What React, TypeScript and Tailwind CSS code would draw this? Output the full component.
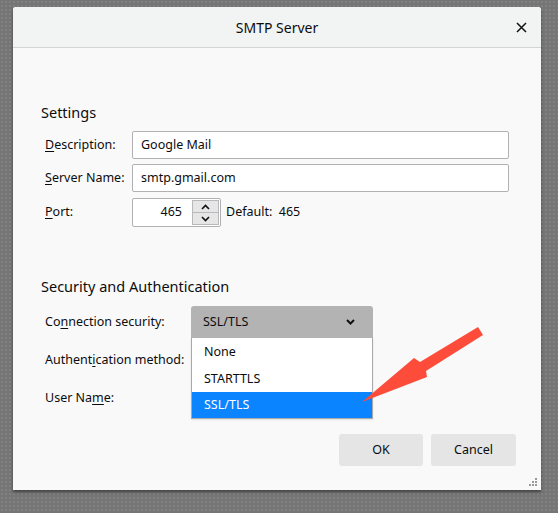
import React from "react";

const font = { fontFamily: '"Noto Sans", "Open Sans", sans-serif' };

function Key({ text, at }: { text: string; at: number }) {
  return (
    <>
      {text.slice(0, at)}
      <span className="underline underline-offset-2">{text[at]}</span>
      {text.slice(at + 1)}
    </>
  );
}

function Field({ value }: { value: string }) {
  return (
    <div className="flex h-[28px] w-[377px] items-center rounded-[2px] border border-[#b1b1b3] bg-white px-[8px] text-[12.5px]">
      {value}
    </div>
  );
}

function Spinner() {
  return (
    <div className="flex h-[29px] w-[89px] items-stretch rounded-[2px] border border-[#b1b1b3] bg-white">
      <div className="flex flex-1 items-center justify-end pr-[10px]">465</div>
      <div className="my-[1px] mr-[1px] flex w-[27px] flex-col border border-[#b9b9bb] bg-[#e6e6e6]">
        <div className="flex flex-1 items-center justify-center border-b border-[#b9b9bb]">
          <svg width="9" height="6" viewBox="0 0 9 6">
            <path d="M1 5 L4.5 1.5 L8 5" fill="none" stroke="#111" strokeWidth="1.6" />
          </svg>
        </div>
        <div className="flex flex-1 items-center justify-center">
          <svg width="9" height="6" viewBox="0 0 9 6">
            <path d="M1 1 L4.5 4.5 L8 1" fill="none" stroke="#111" strokeWidth="1.6" />
          </svg>
        </div>
      </div>
    </div>
  );
}

export default function App() {
  return (
    <div
      className="relative h-[513px] w-[558px] overflow-hidden bg-[#757575] bg-[radial-gradient(#828282_0.8px,transparent_0.8px)] bg-[size:4px_4px] pl-[13px] pt-[7px] text-[#0c0c0d]"
      style={font}
    >
      <div className="relative flex h-[483px] w-[528px] flex-col rounded-t-[3px] bg-[#f9f9fa] shadow-[0_2px_3px_rgba(0,0,0,0.45)]">
        {/* title bar */}
        <div className="relative flex h-[41px] shrink-0 items-center justify-center rounded-t-[3px] border-b border-[#d2d3d5] bg-[#f2f4f4] text-[14px]">
          SMTP Server
          <svg className="absolute right-[14px] top-[15px]" width="11" height="11" viewBox="0 0 11 11">
            <path d="M1 1 L10 10 M10 1 L1 10" stroke="#111" strokeWidth="1.5" />
          </svg>
        </div>

        <div className="flex flex-1 flex-col pl-[28px] text-[12.5px]">
          <div className="mt-[54px] text-[14.5px] leading-[20px]">Settings</div>

          <div className="mt-[9px] flex flex-col gap-[5px]">
            <div className="flex items-center">
              <div className="w-[91px] pl-[4px]"><Key text="Description:" at={0} /></div>
              <Field value="Google Mail" />
            </div>
            <div className="flex items-center">
              <div className="w-[91px] pl-[4px]"><Key text="Server Name:" at={0} /></div>
              <Field value="smtp.gmail.com" />
            </div>
            <div className="mt-[1px] flex items-center">
              <div className="w-[91px] pl-[4px]"><Key text="Port:" at={0} /></div>
              <Spinner />
              <div className="ml-[5px] whitespace-pre">Default:  465</div>
            </div>
          </div>

          <div className="mt-[49px] text-[14.5px] leading-[20px]">Security and Authentication</div>

          <div className="mt-[10px] flex flex-col gap-[6px]">
            <div className="relative flex h-[32px] items-center">
              <div className="w-[150px] pl-[4px]"><Key text="Connection security:" at={2} /></div>
              <div className="flex h-[32px] w-[182px] items-center justify-between rounded-t-[3px] bg-[#b3b3b3] pl-[12px] pr-[18px]">
                SSL/TLS
                <svg width="9" height="6" viewBox="0 0 9 6">
                  <path d="M1 1 L4.5 4.5 L8 1" fill="none" stroke="#111" strokeWidth="2" />
                </svg>
              </div>
              {/* open dropdown list */}
              <div className="absolute left-[150px] top-[32px] z-10 flex w-[182px] flex-col border border-t-0 border-[#a9a9ad] bg-white shadow-[0_1px_2px_rgba(0,0,0,0.1)]">
                <div className="flex h-[29px] items-center pl-[12px]">None</div>
                <div className="flex h-[25px] items-center pl-[12px]">STARTTLS</div>
                <div className="flex h-[26px] items-center bg-[#0a84ff] pl-[12px] text-white">SSL/TLS</div>
              </div>
            </div>
            <div className="flex h-[32px] items-center">
              <div className="w-[150px] pl-[4px]"><Key text="Authentication method:" at={7} /></div>
            </div>
            <div className="flex h-[32px] items-center">
              <div className="w-[150px] pl-[4px]"><Key text="User Name:" at={7} /></div>
            </div>
          </div>

          <div className="mt-[20px] flex justify-end gap-[8px] pr-[25px]">
            <button className="h-[32px] w-[84px] rounded-[3px] bg-[#e5e5e6]">OK</button>
            <button className="h-[32px] w-[85px] rounded-[3px] bg-[#e5e5e6]">Cancel</button>
          </div>
        </div>

        {/* resize grip */}
        <svg className="absolute bottom-[4px] right-[4px]" width="8" height="8" viewBox="0 0 8 8">
          <rect x="6" y="0" width="2" height="2" fill="#9a9a9a" />
          <rect x="3" y="3" width="2" height="2" fill="#9a9a9a" />
          <rect x="6" y="3" width="2" height="2" fill="#9a9a9a" />
          <rect x="0" y="6" width="2" height="2" fill="#9a9a9a" />
          <rect x="3" y="6" width="2" height="2" fill="#9a9a9a" />
          <rect x="6" y="6" width="2" height="2" fill="#9a9a9a" />
        </svg>
      </div>

      {/* annotation arrow */}
      <svg className="absolute left-0 top-0 z-20" width="558" height="513" viewBox="0 0 558 513">
        <polygon
          points="478,327 483,335 426,371 427,377 362,402 414,358 420,362"
          fill="#fd4d3a"
        />
      </svg>
    </div>
  );
}
